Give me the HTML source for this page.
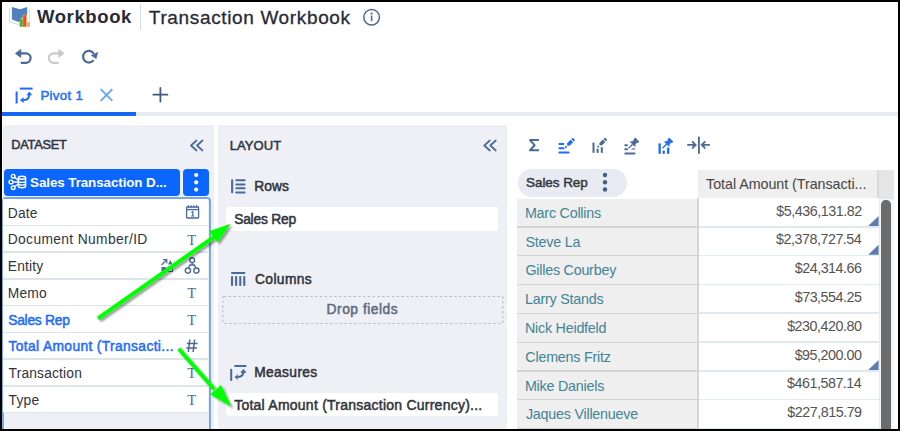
<!DOCTYPE html>
<html><head><meta charset="utf-8">
<style>
html,body{margin:0;padding:0}
body{width:900px;height:431px;overflow:hidden;background:#fff;position:relative;font-family:"Liberation Sans",sans-serif}
.a{position:absolute}
.t{position:absolute;white-space:nowrap;line-height:1}
svg{position:absolute;overflow:visible}
.panel{position:absolute;background:#eef0f5}
.sep{position:absolute;height:1.5px;background:#dfe4eb}
.ico{fill:none;stroke:#4a6a9a;stroke-width:1.6;stroke-linecap:round;stroke-linejoin:round}
</style></head><body>

<!-- header -->
<svg style="left:0;top:0" width="40" height="40">
  <path d="M9.6 8.8 V21.8 L19.4 25" fill="none" stroke="#c9d6ea" stroke-width="1"/>
  <path d="M29.7 8.8 V21" fill="none" stroke="#c9d6ea" stroke-width="1"/>
  <path d="M11.9 7 L20 9.3 L27.2 7 V15 L20 19 V21.8 L17.8 21.8 L11.9 19.6 Z" fill="#5080c0"/>
  <rect x="19.6" y="18.5" width="3.6" height="8.3" fill="#5aae3c"/>
  <rect x="23" y="14.8" width="3.5" height="12" fill="#f04a2a" stroke="#f4a860" stroke-width="0.6"/>
  <rect x="26.3" y="22" width="3.7" height="4.8" fill="#e2b376"/>
</svg>
<div class="a" style="left:139.5px;top:4px;width:1px;height:25.5px;background:#d3dae3"></div>
<svg style="left:0;top:0" width="400" height="40">
  <circle cx="371.6" cy="17.2" r="7.8" fill="none" stroke="#4d6a9c" stroke-width="1.5"/>
  <circle cx="371.6" cy="13.6" r="1.1" fill="#4d6a9c"/>
  <rect x="370.8" y="15.6" width="1.6" height="5.6" rx="0.6" fill="#4d6a9c"/>
</svg>

<!-- undo / redo / refresh -->
<svg style="left:0;top:0" width="120" height="80">
  <g id="undo">
    <path d="M20 53.4 H25.9 A4.7 4.7 0 0 1 25.9 62.8 H21.6" fill="none" stroke="#4a6a9a" stroke-width="2.2" stroke-linecap="round"/>
    <path d="M15.4 53.4 L20.8 49.4 L20.8 57.4 Z" fill="#4a6a9a" stroke="#4a6a9a" stroke-width="0.8" stroke-linejoin="round"/>
  </g>
  <g transform="translate(79.5 0) scale(-1 1)">
    <path d="M20 53.4 H25.9 A4.7 4.7 0 0 1 25.9 62.8 H21.6" fill="none" stroke="#cacaca" stroke-width="2.2" stroke-linecap="round"/>
    <path d="M15.4 53.4 L20.8 49.4 L20.8 57.4 Z" fill="#cacaca" stroke="#cacaca" stroke-width="0.8" stroke-linejoin="round"/>
  </g>
  <path d="M93.3 53.0 A5.8 5.8 0 1 0 93 60.8" fill="none" stroke="#4a6a9a" stroke-width="2.2" stroke-linecap="round"/>
  <path d="M97.8 52.3 L96.2 58.6 L91.2 55.4 Z" fill="#4a6a9a" stroke="#4a6a9a" stroke-width="0.6" stroke-linejoin="round"/>
</svg>

<!-- tab -->
<svg style="left:0;top:0" width="200" height="120">
  <rect x="15.6" y="91.5" width="2" height="12" fill="#1f6bff"/>
  <rect x="19.8" y="87.6" width="12.8" height="2" fill="#1f6bff"/>
  <path d="M29.3 94.5 C29.3 98.5 26.5 100.2 22.5 100.2" fill="none" stroke="#1f6bff" stroke-width="2"/>
  <path d="M26.3 95.2 L29.4 91.6 L32.3 95.2 Z" fill="#1f6bff"/>
  <path d="M23.6 97.2 L20 100.2 L23.6 103 Z" fill="#1f6bff"/>
  <path d="M101.2 89.6 L111.8 100.4 M111.8 89.6 L101.2 100.4" stroke="#66a5fb" stroke-width="1.9" stroke-linecap="round" fill="none"/>
  <path d="M153.4 94.7 H167.4 M160.4 87.9 V101.6" stroke="#44597c" stroke-width="1.8" stroke-linecap="round" fill="none"/>
</svg>
<div class="a" style="left:2px;top:112px;width:134px;height:4px;background:#1666f5"></div>
<div class="a" style="left:136px;top:112.3px;width:762px;height:3.7px;background:#e8edf1"></div>

<!-- panels -->
<div class="panel" style="left:2.6px;top:124.5px;width:211px;height:304px"></div>
<div class="panel" style="left:217.6px;top:124.5px;width:289.4px;height:304px"></div>

<!-- dataset panel -->
<svg style="left:0;top:0" width="520" height="431">
  <g class="ico" style="stroke-width:1.7">
    <path d="M196.5 140.5 L191 145.5 L196.5 150.5 M202.5 140.5 L197 145.5 L202.5 150.5"/>
    <path d="M489.8 140.5 L484.3 145.5 L489.8 150.5 M495.8 140.5 L490.3 145.5 L495.8 150.5"/>
  </g>
</svg>
<div class="a" style="left:4.4px;top:168.6px;width:175.8px;height:27px;background:#0b65ff;border-radius:4px"></div>
<div class="a" style="left:183px;top:168.7px;width:26.3px;height:27px;background:#0b65ff;border-radius:4px"></div>
<svg style="left:0;top:0" width="220" height="220">
  <g fill="#fff">
    <circle cx="196.2" cy="175" r="2.1"/><circle cx="196.2" cy="182.3" r="2.1"/><circle cx="196.2" cy="189.6" r="2.1"/>
  </g>
  <g fill="none" stroke="#fff" stroke-width="1.4">
    <ellipse cx="22" cy="177.8" rx="3.6" ry="1.5"/>
    <path d="M18.4 177.8 V186.2 A3.6 1.5 0 0 0 25.6 186.2 V177.8 M18.4 180.9 A3.6 1.5 0 0 0 25.6 180.9 M18.4 183.6 A3.6 1.5 0 0 0 25.6 183.6"/>
    <circle cx="11" cy="182" r="1.9"/><circle cx="13.2" cy="176.2" r="1.8"/><circle cx="13.2" cy="187.8" r="1.8"/>
    <path d="M12.9 182 H18.4 M14.6 177.4 L18.4 180.2 M14.6 186.6 L18.4 184"/>
  </g>
</svg>

<div class="a" style="left:1.7px;top:196.5px;width:209.4px;height:250px;box-sizing:border-box;border:2.4px solid #7aa8e2;border-radius:4px"></div>
<div class="a" style="left:2.6px;top:199px;width:205.2px;height:213.5px;background:#fff"></div>
<div class="sep" style="left:2.6px;top:224.6px;width:205px"></div>
<div class="sep" style="left:2.6px;top:251.3px;width:205px"></div>
<div class="sep" style="left:2.6px;top:278.1px;width:205px"></div>
<div class="sep" style="left:2.6px;top:304.8px;width:205px"></div>
<div class="sep" style="left:2.6px;top:331.6px;width:205px"></div>
<div class="sep" style="left:2.6px;top:358.3px;width:205px"></div>
<div class="sep" style="left:2.6px;top:385.1px;width:205px"></div>
<div class="sep" style="left:2.6px;top:411.8px;width:205px"></div>

<!-- dataset row icons -->
<svg style="left:0;top:0" width="220" height="431">
  <g fill="none" stroke="#4a6a9a" stroke-width="1.3">
    <rect x="186.6" y="207" width="12" height="11" rx="0.8"/>
    <path d="M186.6 209.6 H198.6"/>
  </g>
  <path d="M188.5 205.3 V207.5 M191.2 205.3 V207.5 M193.9 205.3 V207.5 M196.6 205.3 V207.5" stroke="#4a6a9a" stroke-width="1.1"/>
  <path d="M191.4 212.6 L192.8 211.6 V216 M191.3 216 H194.3" stroke="#4a6a9a" stroke-width="1.2" fill="none"/>
  <g fill="none" stroke="#4a6a9a" stroke-width="1.4">
    <circle cx="192.2" cy="260.2" r="2.4"/>
    <circle cx="187.9" cy="270.6" r="2.6"/>
    <circle cx="196.4" cy="270.6" r="2.6"/>
    <path d="M192.2 262.6 V265 M188.5 268 L190 265 H194.4 L195.9 268"/>
  </g>
  <g fill="#4a6a9a">
    <path d="M161.5 265 L166.5 260 M163 259.6 H166.8 V263.4" stroke="#4a6a9a" stroke-width="1.2" fill="none"/>
    <path d="M168 264.5 L170.3 260 L172.5 264.5 Z"/>
    <rect x="161.5" y="267" width="4.4" height="4.5"/>
    <rect x="168" y="267" width="4.4" height="4.5" fill="none" stroke="#4a6a9a" stroke-width="1"/>
  </g>
</svg>
<div class="t" style="left:187.3px;top:232.6px;font-family:'Liberation Serif',serif;font-size:14.5px;color:#4a6a9a">T</div>
<div class="t" style="left:187.3px;top:286.1px;font-family:'Liberation Serif',serif;font-size:14.5px;color:#4a6a9a">T</div>
<div class="t" style="left:187.3px;top:312.8px;font-family:'Liberation Serif',serif;font-size:14.5px;color:#4a6a9a">T</div>
<div class="t" style="left:187.3px;top:366.3px;font-family:'Liberation Serif',serif;font-size:14.5px;color:#4a6a9a">T</div>
<div class="t" style="left:187.3px;top:393px;font-family:'Liberation Serif',serif;font-size:14.5px;color:#4a6a9a">T</div>
<svg style="left:0;top:0" width="220" height="431">
  <path d="M189.8 339.5 L188.3 352 M194.6 339.5 L193.1 352 M186.8 343.5 H197.6 M186.2 348 H197" stroke="#4a6a9a" stroke-width="1.5" fill="none"/>
</svg>

<!-- layout panel -->
<svg style="left:0;top:0" width="520" height="431">
  <g fill="#4a6a9a">
    <rect x="231.1" y="179.2" width="2.1" height="14.1" rx="0.8"/>
    <rect x="235.3" y="179.3" width="10.2" height="2" rx="0.8"/>
    <rect x="235.3" y="183.4" width="10.2" height="2" rx="0.8"/>
    <rect x="235.3" y="187.3" width="10.2" height="2" rx="0.8"/>
    <rect x="235.3" y="191.5" width="10.2" height="2" rx="0.8"/>
    <!-- columns icon -->
    <rect x="231.1" y="272" width="14.3" height="2" rx="0.8"/>
    <rect x="231" y="275.9" width="2.1" height="10.2" rx="0.8"/>
    <rect x="235.1" y="275.9" width="2.1" height="10.2" rx="0.8"/>
    <rect x="239.2" y="275.9" width="2.1" height="10.2" rx="0.8"/>
    <rect x="243.2" y="275.9" width="2.1" height="10.2" rx="0.8"/>
    <!-- measures icon -->
    <rect x="230.2" y="368.8" width="2" height="12.2" rx="0.8"/>
    <rect x="234.1" y="364.9" width="12.5" height="2" rx="0.8"/>
  </g>
  <path d="M243.2 372.3 C243.2 375.8 240.5 377.1 237.2 377.1" fill="none" stroke="#4a6a9a" stroke-width="2"/>
  <path d="M240.3 372.6 L243.5 368.9 L246.5 372.6 L243.2 373.6 Z" fill="#4a6a9a"/>
  <path d="M238.2 374 L234.5 377.1 L238.2 380.2 L237.2 377.1 Z" fill="#4a6a9a"/>
</svg>
<div class="a" style="left:226.4px;top:207.4px;width:271.6px;height:23.6px;background:#fff;border-radius:3px"></div>
<svg style="left:0;top:0" width="520" height="431"><rect x="222.9" y="296.5" width="280" height="27" rx="1" fill="none" stroke="#b3bcc9" stroke-width="1.1" stroke-dasharray="2.3 2.5"/></svg>
<div class="a" style="left:225.8px;top:392.7px;width:272px;height:23.5px;background:#fff;border-radius:3px"></div>

<!-- pivot toolbar icons -->
<svg style="left:0;top:0" width="900" height="200">
  
  <path d="M539 140.1 H530 L534.6 145.2 L530 150.2 H539" fill="none" stroke="#4a6a9a" stroke-width="2" stroke-linejoin="round"/>
  <g fill="#1f6bff">
    <rect x="558.4" y="143" width="5.9" height="2" rx="1"/>
    <rect x="558.4" y="147.3" width="6.2" height="2" rx="1"/>
    <rect x="558.4" y="151.4" width="11.2" height="2" rx="1"/>
    <g transform="translate(565.3 147.6) rotate(45) scale(0.93)"><circle cx="0" cy="-0.9" r="1.1"/><path d="M-1.9 -10 H1.9 V-4.6 L0 -3 L-1.9 -4.6 Z"/><rect x="-1.9" y="-13.2" width="3.8" height="2.3" rx="1"/></g>
  </g>
  <g fill="#4a6a9a">
    <rect x="592.5" y="142.4" width="2" height="10.6" rx="0.8"/>
    <rect x="596.6" y="148.6" width="2" height="4.4" rx="0.8"/>
    <rect x="600.8" y="147" width="2" height="6" rx="0.8"/>
    <g transform="translate(597.6 147.2) rotate(45) scale(0.92)"><circle cx="0" cy="-0.9" r="1.1"/><path d="M-1.9 -10 H1.9 V-4.6 L0 -3 L-1.9 -4.6 Z"/><rect x="-1.9" y="-13.2" width="3.8" height="2.3" rx="1"/></g>
  </g>
  <g fill="#4a6a9a">
    <rect x="624.4" y="144.2" width="3.5" height="2" rx="0.8"/>
    <rect x="624.4" y="148.2" width="3.5" height="2" rx="0.8"/>
    <path d="M630.8 149.6 Q633.4 146.8 636 149.6 Z"/>
    <rect x="624.4" y="152.6" width="11" height="2" rx="0.8"/>
    <g transform="translate(628.4 148.4) rotate(45) scale(0.92)"><rect x="-0.7" y="-6.5" width="1.4" height="6.5"/><path d="M-4.4 -6.2 H4.4 L2.3 -8.6 V-11.6 H-2.3 V-8.6 Z"/><rect x="-3.2" y="-13.6" width="6.4" height="2.4" rx="0.6"/></g>
  </g>
  <g fill="#1f6bff">
    <rect x="658.5" y="143.3" width="2.3" height="10.6" rx="0.9"/>
    <rect x="662.6" y="150.5" width="2.3" height="3.4" rx="0.9"/>
    <rect x="667" y="147.4" width="2.3" height="6.5" rx="0.9"/>
    <g transform="translate(662.6 148.2) rotate(45) scale(0.9)"><rect x="-0.7" y="-6.5" width="1.4" height="6.5"/><path d="M-4.4 -6.2 H4.4 L2.3 -8.6 V-11.6 H-2.3 V-8.6 Z"/><rect x="-3.2" y="-13.6" width="6.4" height="2.4" rx="0.6"/></g>
  </g>
  <g stroke="#50678f" stroke-width="1.9" fill="none" stroke-linecap="round">
    <path d="M698.9 137.4 V153.1"/>
    <path d="M688 144.9 H695.3 M692.6 141.9 L695.6 144.9 L692.6 147.9"/>
    <path d="M709.1 144.9 H702 M704.8 141.9 L701.8 144.9 L704.8 147.9"/>
  </g>
</svg>

<!-- pivot table -->
<div class="a" style="left:517.7px;top:169.4px;width:109px;height:27.8px;background:#e8ebf1;border-radius:14px"></div>
<svg style="left:0;top:0" width="900" height="431">
  <g fill="#3f5d8e"><circle cx="605" cy="175" r="2.2"/><circle cx="605" cy="182.3" r="2.2"/><circle cx="605" cy="189.5" r="2.2"/></g>
</svg>
<div class="a" style="left:697.8px;top:169.8px;width:180px;height:28.5px;background:#efefef"></div>
<div class="a" style="left:877.4px;top:169.8px;width:1.2px;height:28.5px;background:#d9d9d9"></div>
<div class="a" style="left:878.6px;top:169.8px;width:15.6px;height:29px;background:#e6e6e6"></div>
<div class="a" style="left:517.2px;top:198.8px;width:180.5px;height:240px;background:#efefef"></div>

<div class="a" style="left:697.4px;top:198.3px;width:1.2px;height:240px;background:#d5d5d5"></div>
<div class="a" style="left:878.8px;top:198.8px;width:1.6px;height:240px;background:#e2edf3"></div>
<div class="a" style="left:880.4px;top:198.8px;width:13.3px;height:240px;background:#f1f6f9"></div>
<div class="a" style="left:881.2px;top:199.5px;width:9.4px;height:240px;background:#6b6b6b;border-radius:4.7px"></div>
<div class="a" style="left:517.2px;top:226.3px;width:180.2px;height:1.3px;background:#d4d4d4"></div>
<div class="a" style="left:698.6px;top:226px;width:180.2px;height:1.6px;background:#dfeaf0"></div>
<div class="a" style="left:517.2px;top:255.1px;width:180.2px;height:1.3px;background:#d4d4d4"></div>
<div class="a" style="left:698.6px;top:254.8px;width:180.2px;height:1.6px;background:#dfeaf0"></div>
<div class="a" style="left:517.2px;top:283.9px;width:180.2px;height:1.3px;background:#d4d4d4"></div>
<div class="a" style="left:698.6px;top:283.6px;width:180.2px;height:1.6px;background:#dfeaf0"></div>
<div class="a" style="left:517.2px;top:312.7px;width:180.2px;height:1.3px;background:#d4d4d4"></div>
<div class="a" style="left:698.6px;top:312.4px;width:180.2px;height:1.6px;background:#dfeaf0"></div>
<div class="a" style="left:517.2px;top:341.5px;width:180.2px;height:1.3px;background:#d4d4d4"></div>
<div class="a" style="left:698.6px;top:341.2px;width:180.2px;height:1.6px;background:#dfeaf0"></div>
<div class="a" style="left:517.2px;top:370.3px;width:180.2px;height:1.3px;background:#d4d4d4"></div>
<div class="a" style="left:698.6px;top:370px;width:180.2px;height:1.6px;background:#dfeaf0"></div>
<div class="a" style="left:517.2px;top:399.1px;width:180.2px;height:1.3px;background:#d4d4d4"></div>
<div class="a" style="left:698.6px;top:398.8px;width:180.2px;height:1.6px;background:#dfeaf0"></div>
<div class="a" style="left:517.2px;top:427.9px;width:180.2px;height:1.3px;background:#d4d4d4"></div>
<div class="a" style="left:698.6px;top:427.6px;width:180.2px;height:1.6px;background:#dfeaf0"></div>
<svg style="left:0;top:0" width="900" height="431"><path d="M878.6 226 H868.2 L878.6 216 Z" fill="#5a7db4"/></svg>
<svg style="left:0;top:0" width="900" height="431"><path d="M878.6 254.8 H868.2 L878.6 244.8 Z" fill="#5a7db4"/></svg>
<svg style="left:0;top:0" width="900" height="431"><path d="M878.6 370 H868.2 L878.6 360 Z" fill="#5a7db4"/></svg>

<div class="t" style="left:36.98px;top:7.64px;font-size:18.5px;color:#262a36;font-weight:700;letter-spacing:0.61px;">Workbook</div>
<div class="t" style="left:148.87px;top:8.11px;font-size:19px;color:#262a36;-webkit-text-stroke:0.3px currentColor;letter-spacing:0.64px;">Transaction Workbook</div>
<div class="t" style="left:40.41px;top:89.24px;font-size:13.3px;color:#2270ff;-webkit-text-stroke:0.5px currentColor;letter-spacing:0.3px;">Pivot 1</div>
<div class="t" style="left:11.15px;top:138.96px;font-size:12.8px;color:#30343c;-webkit-text-stroke:0.5px currentColor;letter-spacing:-0.23px;">DATASET</div>
<div class="t" style="left:30.11px;top:175.95px;font-size:13.4px;color:#ffffff;font-weight:700;letter-spacing:-0.09px;">Sales Transaction D...</div>
<div class="t" style="left:7.77px;top:206.62px;font-size:13.8px;color:#30343c;letter-spacing:0.2px;">Date</div>
<div class="t" style="left:7.77px;top:233.37px;font-size:13.8px;color:#30343c;letter-spacing:0.36px;">Document Number/ID</div>
<div class="t" style="left:7.77px;top:260.12px;font-size:13.8px;color:#30343c;letter-spacing:0.19px;">Entity</div>
<div class="t" style="left:7.77px;top:286.87px;font-size:13.8px;color:#30343c;letter-spacing:0.2px;">Memo</div>
<div class="t" style="left:8.27px;top:313.62px;font-size:13.8px;color:#1f6bff;-webkit-text-stroke:0.5px currentColor;letter-spacing:-0.26px;">Sales Rep</div>
<div class="t" style="left:8.59px;top:340.37px;font-size:13.8px;color:#1f6bff;-webkit-text-stroke:0.5px currentColor;letter-spacing:0.36px;">Total Amount (Transacti...</div>
<div class="t" style="left:8.59px;top:367.12px;font-size:13.8px;color:#30343c;letter-spacing:0.17px;">Transaction</div>
<div class="t" style="left:8.59px;top:393.87px;font-size:13.8px;color:#30343c;letter-spacing:0.2px;">Type</div>
<div class="t" style="left:229.73px;top:138.99px;font-size:13px;color:#30343c;-webkit-text-stroke:0.5px currentColor;letter-spacing:0.06px;">LAYOUT</div>
<div class="t" style="left:254.37px;top:179.62px;font-size:13.8px;color:#30343c;-webkit-text-stroke:0.5px currentColor;letter-spacing:0.01px;">Rows</div>
<div class="t" style="left:234.17px;top:212.92px;font-size:13.8px;color:#30343c;-webkit-text-stroke:0.5px currentColor;letter-spacing:-0.22px;">Sales Rep</div>
<div class="t" style="left:255px;top:272.92px;font-size:13.8px;color:#30343c;-webkit-text-stroke:0.5px currentColor;letter-spacing:0.38px;">Columns</div>
<div class="t" style="left:326.57px;top:302.62px;font-size:13.8px;color:#5c6b80;-webkit-text-stroke:0.5px currentColor;letter-spacing:0.52px;">Drop fields</div>
<div class="t" style="left:254.27px;top:365.52px;font-size:13.8px;color:#30343c;-webkit-text-stroke:0.5px currentColor;letter-spacing:0.34px;">Measures</div>
<div class="t" style="left:234.19px;top:397.95px;font-size:14px;color:#30343c;-webkit-text-stroke:0.5px currentColor;letter-spacing:0.24px;">Total Amount (Transaction Currency)...</div>
<div class="t" style="left:525.99px;top:176.27px;font-size:13.5px;color:#353a44;-webkit-text-stroke:0.5px currentColor;letter-spacing:-0.06px;">Sales Rep</div>
<div class="t" style="left:706.08px;top:177.19px;font-size:14.3px;color:#444444;letter-spacing:-0.05px;">Total Amount (Transacti...</div>
<div class="t" style="left:524.93px;top:205.79px;font-size:14.3px;color:#3f8497;letter-spacing:-0.22px;">Marc Collins</div>
<div class="t" style="left:776.33px;top:203.59px;font-size:14.3px;color:#535353;letter-spacing:-0.47px;">$5,436,131.82</div>
<div class="t" style="left:525.45px;top:234.59px;font-size:14.3px;color:#3f8497;letter-spacing:-0.22px;">Steve La</div>
<div class="t" style="left:776.03px;top:232.39px;font-size:14.3px;color:#535353;letter-spacing:-0.47px;">$2,378,727.54</div>
<div class="t" style="left:525.38px;top:263.39px;font-size:14.3px;color:#3f8497;letter-spacing:-0.22px;">Gilles Courbey</div>
<div class="t" style="left:794.7px;top:261.19px;font-size:14.3px;color:#535353;letter-spacing:-0.47px;">$24,314.66</div>
<div class="t" style="left:524.93px;top:292.19px;font-size:14.3px;color:#3f8497;letter-spacing:-0.22px;">Larry Stands</div>
<div class="t" style="left:794.68px;top:289.99px;font-size:14.3px;color:#535353;letter-spacing:-0.47px;">$73,554.25</div>
<div class="t" style="left:524.93px;top:320.99px;font-size:14.3px;color:#3f8497;letter-spacing:-0.22px;">Nick Heidfeld</div>
<div class="t" style="left:787.15px;top:318.79px;font-size:14.3px;color:#535353;letter-spacing:-0.47px;">$230,420.80</div>
<div class="t" style="left:525.37px;top:349.79px;font-size:14.3px;color:#3f8497;letter-spacing:-0.22px;">Clemens Fritz</div>
<div class="t" style="left:794.63px;top:347.59px;font-size:14.3px;color:#535353;letter-spacing:-0.47px;">$95,200.00</div>
<div class="t" style="left:524.93px;top:378.59px;font-size:14.3px;color:#3f8497;letter-spacing:-0.22px;">Mike Daniels</div>
<div class="t" style="left:787.01px;top:376.39px;font-size:14.3px;color:#535353;letter-spacing:-0.47px;">$461,587.14</div>
<div class="t" style="left:525.88px;top:407.39px;font-size:14.3px;color:#3f8497;letter-spacing:-0.22px;">Jaques Villenueve</div>
<div class="t" style="left:787.27px;top:405.19px;font-size:14.3px;color:#535353;letter-spacing:-0.47px;">$227,815.79</div>

<!-- arrows -->
<svg style="left:0;top:0" width="900" height="431">
  <defs><filter id="sh" x="-20%" y="-20%" width="140%" height="140%"><feGaussianBlur in="SourceAlpha" stdDeviation="1.2"/><feOffset dx="1.8" dy="2.2"/><feComponentTransfer><feFuncA type="linear" slope="0.4"/></feComponentTransfer><feMerge><feMergeNode/><feMergeNode in="SourceGraphic"/></feMerge></filter></defs>
  <g filter="url(#sh)" fill="#00ff00">
    <path d="M98 318.5 L214 237" stroke="#00ff00" stroke-width="4" stroke-linecap="butt"/>
    <path d="M230.7 223.8 L208.9 231.2 L217.7 242.4 Z"/>
    <path d="M178.7 348.7 L214 389" stroke="#00ff00" stroke-width="4" stroke-linecap="butt"/>
    <path d="M231.5 406.8 L221.1 384.9 L210.1 394.3 Z"/>
  </g>
</svg>

<!-- frame -->
<div class="a" style="left:0;top:0;width:900px;height:2px;background:#000"></div>
<div class="a" style="left:0;top:0;width:1.8px;height:431px;background:#000"></div>
<div class="a" style="left:898px;top:0;width:2px;height:431px;background:#000"></div>
<div class="a" style="left:0;top:428.5px;width:900px;height:2.5px;background:#000"></div>
</body></html>
